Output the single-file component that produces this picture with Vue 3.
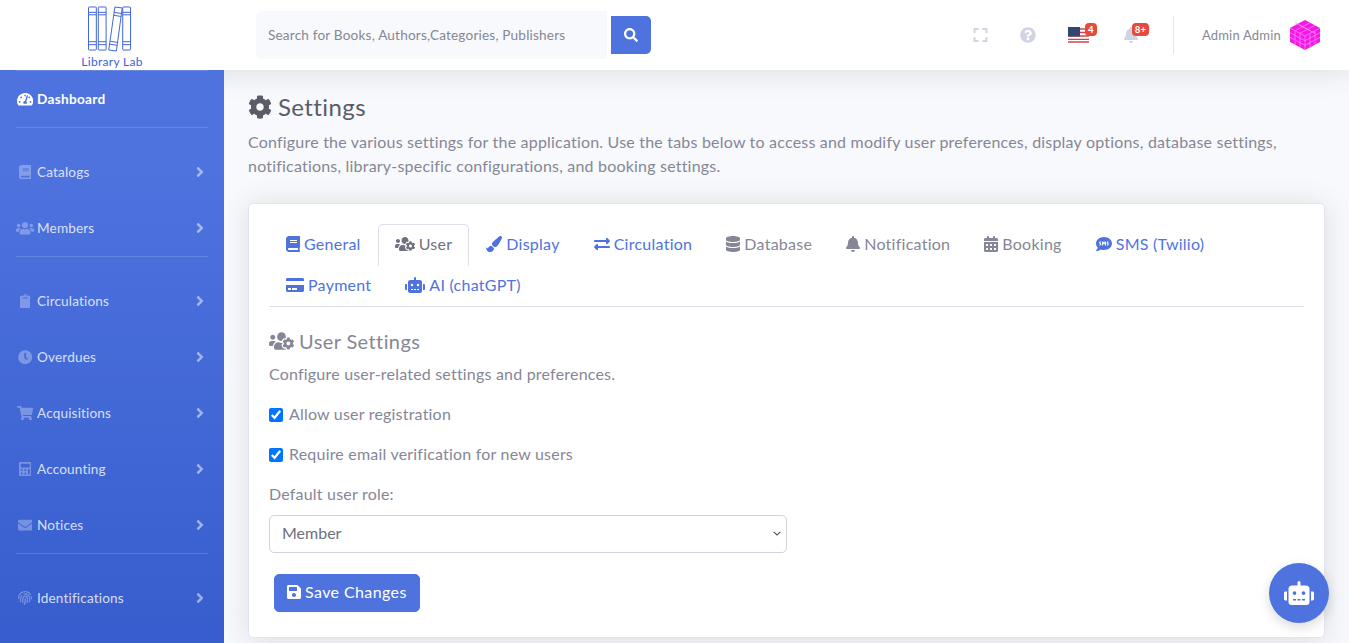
<script setup>
const icons = {
  dashboard: { vb: '0 0 576 512', d: 'M288 32C128.94 32 0 160.94 0 320c0 52.8 14.25 102.26 39.06 144.8 5.61 9.62 16.3 15.2 27.44 15.2h443c11.14 0 21.83-5.58 27.44-15.2C561.75 422.26 576 372.8 576 320c0-159.06-128.94-288-288-288zm0 64c14.71 0 26.58 10.13 30.32 23.65-1.11 2.26-2.64 4.23-3.45 6.67l-9.22 27.67c-5.13 3.49-10.97 6.01-17.64 6.01-17.67 0-32-14.33-32-32S270.33 96 288 96zM96 384c-17.67 0-32-14.33-32-32s14.33-32 32-32 32 14.33 32 32-14.33 32-32 32zm48-160c-17.67 0-32-14.33-32-32s14.33-32 32-32 32 14.33 32 32-14.33 32-32 32zm246.77-72.41l-61.33 184C343.13 347.33 352 364.54 352 384c0 11.72-3.38 22.55-8.88 32H232.88c-5.5-9.45-8.88-20.28-8.88-32 0-33.94 26.5-61.43 59.9-63.59l61.34-184.01c4.17-12.56 17.73-19.45 30.36-15.17 12.57 4.19 19.35 17.79 15.17 30.36zm14.66 57.2l15.52-46.55c3.47-1.29 7.13-2.23 11.05-2.23 17.67 0 32 14.33 32 32s-14.33 32-32 32c-11.38-.01-20.89-6.28-26.57-15.22zM480 384c-17.67 0-32-14.33-32-32s14.33-32 32-32 32 14.33 32 32-14.33 32-32 32z' },
  book: { vb: '0 0 448 512', d: 'M448 360V24c0-13.3-10.7-24-24-24H96C43 0 0 43 0 96v320c0 53 43 96 96 96h328c13.3 0 24-10.7 24-24v-16c0-7.5-3.5-14.3-8.9-18.7-4.2-15.4-4.2-59.3 0-74.7 5.4-4.3 8.9-11.1 8.9-18.6zM128 134c0-3.3 2.7-6 6-6h212c3.3 0 6 2.7 6 6v20c0 3.3-2.7 6-6 6H134c-3.3 0-6-2.7-6-6v-20zm0 64c0-3.3 2.7-6 6-6h212c3.3 0 6 2.7 6 6v20c0 3.3-2.7 6-6 6H134c-3.3 0-6-2.7-6-6v-20zm253.4 250H96c-17.7 0-32-14.3-32-32 0-17.6 14.4-32 32-32h285.4c-1.9 17.1-1.9 46.9 0 64z' },
  users: { vb: '0 0 640 512', d: 'M96 224c35.3 0 64-28.7 64-64s-28.7-64-64-64-64 28.7-64 64 28.7 64 64 64zm448 0c35.3 0 64-28.7 64-64s-28.7-64-64-64-64 28.7-64 64 28.7 64 64 64zm32 32h-64c-17.6 0-33.5 7.1-45.1 18.6 40.3 22.1 68.9 62 75.1 109.4h66c17.7 0 32-14.3 32-32v-32c0-35.3-28.7-64-64-64zm-256 0c61.9 0 112-50.1 112-112S381.9 32 320 32 208 82.1 208 144s50.1 112 112 112zm76.8 32h-8.3c-20.8 10-43.9 16-68.5 16s-47.6-6-68.5-16h-8.3C179.6 288 128 339.6 128 403.2V432c0 26.5 21.5 48 48 48h288c26.5 0 48-21.5 48-48v-28.8c0-63.6-51.6-115.2-115.2-115.2zm-223.7-13.4C161.5 263.1 145.6 256 128 256H64c-35.3 0-64 28.7-64 64v32c0 17.7 14.3 32 32 32h65.9c6.3-47.4 34.9-87.3 75.2-109.4z' },
  angle: { vb: '0 0 256 512', d: 'M224.3 273l-136 136c-9.4 9.4-24.6 9.4-33.9 0l-22.6-22.6c-9.4-9.4-9.4-24.6 0-33.9l96.4-96.4-96.4-96.4c-9.4-9.4-9.4-24.6 0-33.9L54.3 103c9.4-9.4 24.6-9.4 33.9 0l136 136c9.5 9.4 9.5 24.6.1 34z' },
  clipboard: { vb: '0 0 384 512', d: 'M384 112v352c0 26.51-21.49 48-48 48H48c-26.51 0-48-21.49-48-48V112c0-26.51 21.49-48 48-48h80c0-35.29 28.71-64 64-64s64 28.71 64 64h80c26.51 0 48 21.49 48 48zM192 40c-13.255 0-24 10.745-24 24s10.745 24 24 24 24-10.745 24-24-10.745-24-24-24m96 114v-20a6 6 0 0 0-6-6H102a6 6 0 0 0-6 6v20a6 6 0 0 0 6 6h180a6 6 0 0 0 6-6z' },
  clock: { vb: '0 0 512 512', d: 'M256,8C119,8,8,119,8,256S119,504,256,504,504,393,504,256,393,8,256,8Zm92.49,313h0l-20,25a16,16,0,0,1-22.49,2.5h0l-67-49.72a40,40,0,0,1-15-31.23V112a16,16,0,0,1,16-16h32a16,16,0,0,1,16,16V256l58,42.5A16,16,0,0,1,348.49,321Z' },
  cart: { vb: '0 0 576 512', d: 'M528.12 301.319l47.273-208C578.806 78.301 567.391 64 551.99 64H159.208l-9.166-44.81C147.758 8.021 137.93 0 126.529 0H24C10.745 0 0 10.745 0 24v16c0 13.255 10.745 24 24 24h69.883l70.248 343.435C147.325 417.1 136 435.222 136 456c0 30.928 25.072 56 56 56s56-25.072 56-56c0-15.674-6.447-29.835-16.824-40h209.647C430.447 426.165 424 440.326 424 456c0 30.928 25.072 56 56 56s56-25.072 56-56c0-22.172-12.888-41.332-31.579-50.405l5.517-24.276c3.413-15.018-8.002-29.319-23.403-29.319H218.117l-6.545-32h293.145c11.206 0 20.92-7.754 23.403-18.681z' },
  calculator: { vb: '0 0 448 512', d: 'M400 0H48C22.4 0 0 22.4 0 48v416c0 25.6 22.4 48 48 48h352c25.6 0 48-22.4 48-48V48c0-25.6-22.4-48-48-48zM128 435.2c0 6.4-6.4 12.8-12.8 12.8H76.8c-6.4 0-12.8-6.4-12.8-12.8v-38.4c0-6.4 6.4-12.8 12.8-12.8h38.4c6.4 0 12.8 6.4 12.8 12.8v38.4zm0-128c0 6.4-6.4 12.8-12.8 12.8H76.8c-6.4 0-12.8-6.4-12.8-12.8v-38.4c0-6.4 6.4-12.8 12.8-12.8h38.4c6.4 0 12.8 6.4 12.8 12.8v38.4zm128 128c0 6.4-6.4 12.8-12.8 12.8h-38.4c-6.4 0-12.8-6.4-12.8-12.8v-38.4c0-6.4 6.4-12.8 12.8-12.8h38.4c6.4 0 12.8 6.4 12.8 12.8v38.4zm0-128c0 6.4-6.4 12.8-12.8 12.8h-38.4c-6.4 0-12.8-6.4-12.8-12.8v-38.4c0-6.4 6.4-12.8 12.8-12.8h38.4c6.4 0 12.8 6.4 12.8 12.8v38.4zm128 128c0 6.4-6.4 12.8-12.8 12.8h-38.4c-6.4 0-12.8-6.4-12.8-12.8V268.8c0-6.4 6.4-12.8 12.8-12.8h38.4c6.4 0 12.8 6.4 12.8 12.8v166.4zm0-256c0 6.4-6.4 12.8-12.8 12.8H76.8c-6.4 0-12.8-6.4-12.8-12.8V76.8C64 70.4 70.4 64 76.8 64h294.4c6.4 0 12.8 6.4 12.8 12.8v102.4z' },
  envelope: { vb: '0 0 512 512', d: 'M502.3 190.8c3.9-3.1 9.7-.2 9.7 4.7V400c0 26.5-21.5 48-48 48H48c-26.5 0-48-21.5-48-48V195.6c0-5 5.7-7.8 9.7-4.7 22.4 17.4 52.1 39.5 154.1 113.6 21.1 15.4 56.7 47.8 92.2 47.6 35.7.3 72-32.8 92.3-47.6 102-74.1 131.6-96.3 154-113.7zM256 320c23.2.4 56.6-29.2 73.4-41.4 132.7-96.3 142.8-104.7 173.4-128.7 5.8-4.5 9.2-11.5 9.2-18.9v-19c0-26.5-21.5-48-48-48H48C21.5 64 0 85.5 0 112v19c0 7.4 3.4 14.3 9.2 18.9 30.6 23.9 40.7 32.4 173.4 128.7 16.8 12.2 50.2 41.8 73.4 41.4z' },
  fingerprint: { vb: '0 0 512 512', d: 'M256.12 245.96c-13.25 0-24 10.74-24 24 1.14 72.25-8.14 141.9-27.7 211.55-2.73 9.72 2.15 30.49 23.12 30.49 10.48 0 20.11-6.92 23.09-17.52 13.53-47.91 31.04-125.41 29.48-224.52.01-13.25-10.73-24-23.99-24zm-.86-81.73C194 164.16 151.25 211.3 152.1 265.32c.75 47.94-3.75 95.91-13.37 142.55-2.69 12.98 5.67 25.69 18.64 28.36 13.05 2.67 25.67-5.66 28.36-18.64 10.34-50.09 15.17-101.58 14.37-153.02-.41-25.95 19.92-52.49 54.45-52.34 31.31.47 57.15 25.34 57.62 55.47.77 48.05-2.81 96.33-10.61 143.55-2.17 13.06 6.69 25.42 19.76 27.58 19.97 3.33 26.81-15.1 27.58-19.77 8.28-50.03 12.06-101.21 11.27-152.11-.88-55.8-47.94-101.88-104.91-102.72zm-110.69-19.78c-10.3-8.34-25.37-6.8-33.76 3.48-25.62 31.5-39.39 71.28-38.75 112 .59 37.58-2.47 75.27-9.11 112.05-2.34 13.05 6.31 25.53 19.36 27.89 20.11 3.5 27.07-14.81 27.89-19.36 7.19-39.84 10.5-80.66 9.86-121.33-.47-29.88 9.2-57.88 28-80.97 8.35-10.28 6.79-25.39-3.49-33.76zm109.47-62.33c-15.41-.41-30.87 1.44-45.78 4.97-12.89 3.06-20.87 15.98-17.83 28.89 3.06 12.89 16 20.83 28.89 17.83 11.05-2.61 22.47-3.77 34-3.69 75.43 1.13 137.73 61.5 138.88 134.58.59 37.88-1.28 76.11-5.58 113.63-1.5 13.17 7.95 25.08 21.11 26.58 16.72 1.95 25.51-11.88 26.58-21.11a929.06 929.06 0 0 0 5.89-119.85c-1.56-98.75-85.07-180.33-186.16-181.83zm252.07 121.45c-2.86-12.92-15.51-21.2-28.61-18.27-12.94 2.86-21.12 15.66-18.26 28.61 4.71 21.41 4.91 37.41 4.7 61.6-.11 13.27 10.55 24.09 23.8 24.2h.2c13.17 0 23.89-10.61 24-23.8.18-22.18.4-44.11-5.83-72.34zm-40.12-90.72C417.29 43.46 337.6 1.29 252.81.02 183.02-.82 118.47 24.91 70.46 72.94 24.09 119.37-.9 181.04.14 246.65l-.12 21.47c-.39 13.25 10.03 24.31 23.28 24.69.23.02.48.02.72.02 12.92 0 23.59-10.3 23.97-23.3l.16-23.64c-.83-52.5 19.16-101.86 56.28-139 38.76-38.8 91.34-59.67 147.68-58.86 69.45 1.03 134.73 35.56 174.62 92.39 7.61 10.86 22.56 13.45 33.42 5.86 10.84-7.62 13.46-22.59 5.84-33.43z' },
  cog: { vb: '0 0 512 512', d: 'M487.4 315.7l-42.6-24.6c4.3-23.2 4.3-47 0-70.2l42.6-24.6c4.9-2.8 7.1-8.6 5.5-14-11.1-35.6-30-67.8-54.7-94.6-3.8-4.1-10-5.1-14.8-2.3L380.8 110c-17.9-15.4-38.5-27.3-60.8-35.1V25.8c0-5.6-3.9-10.5-9.4-11.7-36.7-8.2-74.3-7.8-109.2 0-5.5 1.2-9.4 6.1-9.4 11.7V75c-22.2 7.9-42.8 19.8-60.8 35.1L88.7 85.5c-4.9-2.8-11-1.9-14.8 2.3-24.7 26.7-43.6 58.9-54.7 94.6-1.7 5.4.6 11.2 5.5 14L67.3 221c-4.3 23.2-4.3 47 0 70.2l-42.6 24.6c-4.9 2.8-7.1 8.6-5.5 14 11.1 35.6 30 67.8 54.7 94.6 3.8 4.1 10 5.1 14.8 2.3l42.6-24.6c17.9 15.4 38.5 27.3 60.8 35.1v49.2c0 5.6 3.9 10.5 9.4 11.7 36.7 8.2 74.3 7.8 109.2 0 5.5-1.2 9.4-6.1 9.4-11.7v-49.2c22.2-7.9 42.8-19.8 60.8-35.1l42.6 24.6c4.9 2.8 11 1.9 14.8-2.3 24.7-26.7 43.6-58.9 54.7-94.6 1.5-5.5-.7-11.3-5.6-14.1zM256 336c-44.1 0-80-35.9-80-80s35.9-80 80-80 80 35.9 80 80-35.9 80-80 80z' },
  usersCog: { vb: '0 0 640 512', d: 'M610.5 341.3c2.6-14.1 2.6-28.5 0-42.6l25.8-14.9c3-1.7 4.3-5.2 3.3-8.5-6.7-21.6-18.2-41.2-33.2-57.4-2.3-2.5-6-3.1-9-1.4l-25.8 14.9c-10.9-9.3-23.4-16.5-36.9-21.3v-29.8c0-3.4-2.4-6.4-5.7-7.1-22.3-5-45-4.8-66.2 0-3.3.7-5.7 3.7-5.7 7.1v29.8c-13.5 4.8-26 12-36.9 21.3l-25.8-14.9c-2.9-1.7-6.7-1.1-9 1.4-15 16.2-26.5 35.8-33.2 57.4-1 3.3.4 6.8 3.3 8.5l25.8 14.9c-2.6 14.1-2.6 28.5 0 42.6l-25.8 14.9c-3 1.7-4.3 5.2-3.3 8.5 6.7 21.6 18.2 41.1 33.2 57.4 2.3 2.5 6 3.1 9 1.4l25.8-14.9c10.9 9.3 23.4 16.5 36.9 21.3v29.8c0 3.4 2.4 6.4 5.7 7.1 22.3 5 45 4.8 66.2 0 3.3-.7 5.7-3.7 5.7-7.1v-29.8c13.5-4.8 26-12 36.9-21.3l25.8 14.9c2.9 1.7 6.7 1.1 9-1.4 15-16.2 26.5-35.8 33.2-57.4 1-3.3-.4-6.8-3.3-8.5l-25.8-14.9zM496 368.5c-26.8 0-48.5-21.8-48.5-48.5s21.8-48.5 48.5-48.5 48.5 21.8 48.5 48.5-21.7 48.5-48.5 48.5zM96 224c35.3 0 64-28.7 64-64s-28.7-64-64-64-64 28.7-64 64 28.7 64 64 64zm224 32c1.9 0 3.7-.5 5.6-.6 8.3-21.7 20.5-42.1 36.3-59.2 7.4-8 17.9-12.6 28.9-12.6 6.9 0 13.7 1.8 19.6 5.3l7.9 4.6c.8-.5 1.6-.9 2.4-1.4 7-14.6 11.2-30.8 11.2-48 0-61.9-50.1-112-112-112S208 82.1 208 144c0 61.9 50.1 112 112 112zm105.2 194.5c-2.3-1.2-4.6-2.6-6.8-3.9-8.2 4.8-15.3 9.8-27.5 9.8-10.9 0-21.4-4.6-28.9-12.6-18.3-19.8-32.3-43.9-40.2-69.6-10.7-34.5 24.9-49.7 25.8-50.3-.1-2.6-.1-5.2 0-7.8l-7.9-4.6c-3.8-2.2-7-5-9.8-8.1-3.3.2-6.5.6-9.8.6-24.6 0-47.6-6-68.5-16h-8.3C179.6 288 128 339.6 128 403.2V432c0 26.5 21.5 48 48 48h255.4c-3.7-6-6.2-12.8-6.2-20.3v-9.2zM173.1 274.6C161.5 263.1 145.6 256 128 256H64c-35.3 0-64 28.7-64 64v32c0 17.7 14.3 32 32 32h65.9c6.3-47.4 34.9-87.3 75.2-109.4z' },
  brush: { vb: '0 0 512 512', d: 'M167.02 309.34c-40.12 2.58-76.53 17.86-97.19 72.3-2.35 6.21-8 9.98-14.59 9.98-11.11 0-45.46-27.67-55.25-34.35C0 439.62 37.93 512 128 512c75.86 0 128-43.77 128-120.19 0-3.11-.65-6.08-.97-9.13l-88.01-73.34zM457.89 0c-15.16 0-29.37 6.71-40.21 16.45C213.27 199.05 192 203.34 192 257.09c0 13.7 3.25 26.76 8.73 38.7l63.82 53.18c7.21 1.8 14.64 3.03 22.39 3.03 62.11 0 98.11-45.47 211.16-256.46 7.38-14.35 13.9-29.85 13.9-45.99C512 20.64 486 0 457.89 0z' },
  exchange: { vb: '0 0 512 512', d: 'M0 168v-16c0-13.255 10.745-24 24-24h360V80c0-21.367 25.899-32.042 40.971-16.971l80 80c9.372 9.373 9.372 24.569 0 33.941l-80 80C409.956 271.982 384 261.456 384 240v-48H24c-13.255 0-24-10.745-24-24zm488 152H128v-48c0-21.314-25.862-32.08-40.971-16.971l-80 80c-9.372 9.373-9.372 24.569 0 33.941l80 80C102.057 463.997 128 453.437 128 432v-48h360c13.255 0 24-10.745 24-24v-16c0-13.255-10.745-24-24-24z' },
  database: { vb: '0 0 448 512', d: 'M448 73.143v45.714C448 159.143 347.667 192 224 192S0 159.143 0 118.857V73.143C0 32.857 100.333 0 224 0s224 32.857 224 73.143zM448 176v102.857C448 319.143 347.667 352 224 352S0 319.143 0 278.857V176c48.125 33.143 136.208 48.572 224 48.572S399.874 209.143 448 176zm0 160v102.857C448 479.143 347.667 512 224 512S0 479.143 0 438.857V336c48.125 33.143 136.208 48.572 224 48.572S399.874 369.143 448 336z' },
  bell: { vb: '0 0 448 512', d: 'M224 512c35.32 0 63.97-28.65 63.97-64H160.03c0 35.35 28.65 64 63.97 64zm215.39-149.71c-19.32-20.76-55.47-51.99-55.47-154.29 0-77.7-54.48-139.9-127.94-155.16V32c0-17.67-14.32-32-31.98-32s-31.98 14.33-31.98 32v20.84C118.56 68.1 64.08 130.3 64.08 208c0 102.3-36.15 133.53-55.47 154.29-6 6.45-8.66 14.16-8.61 21.71.11 16.4 12.98 32 32.1 32h383.8c19.12 0 32-15.6 32.1-32 .05-7.55-2.61-15.27-8.61-21.71z' },
  calendar: { vb: '0 0 448 512', d: 'M0 464c0 26.5 21.5 48 48 48h352c26.5 0 48-21.5 48-48V192H0v272zm320-196c0-6.6 5.4-12 12-12h40c6.6 0 12 5.4 12 12v40c0 6.6-5.4 12-12 12h-40c-6.6 0-12-5.4-12-12v-40zm0 128c0-6.6 5.4-12 12-12h40c6.6 0 12 5.4 12 12v40c0 6.6-5.4 12-12 12h-40c-6.6 0-12-5.4-12-12v-40zM192 268c0-6.6 5.4-12 12-12h40c6.6 0 12 5.4 12 12v40c0 6.6-5.4 12-12 12h-40c-6.6 0-12-5.4-12-12v-40zm0 128c0-6.6 5.4-12 12-12h40c6.6 0 12 5.4 12 12v40c0 6.6-5.4 12-12 12h-40c-6.6 0-12-5.4-12-12v-40zM64 268c0-6.6 5.4-12 12-12h40c6.6 0 12 5.4 12 12v40c0 6.6-5.4 12-12 12H76c-6.6 0-12-5.4-12-12v-40zm0 128c0-6.6 5.4-12 12-12h40c6.6 0 12 5.4 12 12v40c0 6.6-5.4 12-12 12H76c-6.6 0-12-5.4-12-12v-40zM400 64h-48V16c0-8.8-7.2-16-16-16h-32c-8.8 0-16 7.2-16 16v48H160V16c0-8.8-7.2-16-16-16h-32c-8.8 0-16 7.2-16 16v48H48C21.5 64 0 85.5 0 112v48h448v-48c0-26.5-21.5-48-48-48z' },
  sms: { vb: '0 0 512 512', d: 'M256 32C114.6 32 0 125.1 0 240c0 49.6 21.4 95 57 130.7C44.5 421.1 2.7 466 2.2 466.5c-2.2 2.3-2.8 5.7-1.5 8.7 1.3 3 4.1 4.8 7.3 4.8 66.3 0 116-31.8 140.6-51.4 32.7 12.3 69 19.4 107.4 19.4 141.4 0 256-93.1 256-208S397.4 32 256 32zM128.2 304H116c-4.4 0-8-3.6-8-8v-16c0-4.4 3.6-8 8-8h12.3c6 0 10.4-3.5 10.4-6.6 0-1.3-.8-2.7-2.1-3.8l-21.9-18.8c-8.5-7.2-13.3-17.5-13.3-28.1 0-21.3 19-38.6 42.4-38.6H156c4.4 0 8 3.6 8 8v16c0 4.4-3.6 8-8 8h-12.3c-6 0-10.4 3.5-10.4 6.6 0 1.3.8 2.7 2.1 3.8l21.9 18.8c8.5 7.2 13.3 17.5 13.3 28.1.1 21.3-19 38.6-42.4 38.6zm191.8-8c0 4.4-3.6 8-8 8h-16c-4.4 0-8-3.6-8-8v-68.2l-24.8 55.8c-2.9 5.9-11.4 5.9-14.3 0L224 227.8V296c0 4.4-3.6 8-8 8h-16c-4.4 0-8-3.6-8-8V192c0-8.8 7.2-16 16-16h16c6.1 0 11.6 3.4 14.3 8.8l17.7 35.4 17.7-35.4c2.7-5.4 8.3-8.8 14.3-8.8h16c8.8 0 16 7.2 16 16v104zm48.3 8H356c-4.4 0-8-3.6-8-8v-16c0-4.4 3.6-8 8-8h12.3c6 0 10.4-3.5 10.4-6.6 0-1.3-.8-2.7-2.1-3.8l-21.9-18.8c-8.5-7.2-13.3-17.5-13.3-28.1 0-21.3 19-38.6 42.4-38.6H396c4.4 0 8 3.6 8 8v16c0 4.4-3.6 8-8 8h-12.3c-6 0-10.4 3.5-10.4 6.6 0 1.3.8 2.7 2.1 3.8l21.9 18.8c8.5 7.2 13.3 17.5 13.3 28.1.1 21.3-18.9 38.6-42.3 38.6z' },
  card: { vb: '0 0 576 512', d: 'M0 432c0 26.5 21.5 48 48 48h480c26.5 0 48-21.5 48-48V256H0v176zm192-68c0-6.6 5.4-12 12-12h136c6.6 0 12 5.4 12 12v40c0 6.6-5.4 12-12 12H204c-6.6 0-12-5.4-12-12v-40zm-128 0c0-6.6 5.4-12 12-12h72c6.6 0 12 5.4 12 12v40c0 6.6-5.4 12-12 12H76c-6.6 0-12-5.4-12-12v-40zM576 80v48H0V80c0-26.5 21.5-48 48-48h480c26.5 0 48 21.5 48 48z' },
  robot: { vb: '0 0 640 512', d: 'M32,224H64V416H32A31.96166,31.96166,0,0,1,0,384V256A31.96166,31.96166,0,0,1,32,224Zm512-48V448a64.06328,64.06328,0,0,1-64,64H160a64.06328,64.06328,0,0,1-64-64V176a79.974,79.974,0,0,1,80-80H288V32a32,32,0,0,1,64,0V96H464A79.974,79.974,0,0,1,544,176ZM264,256a40,40,0,1,0-40,40A39.997,39.997,0,0,0,264,256Zm-8,128H192v32h64Zm96,0H288v32h64ZM456,256a40,40,0,1,0-40,40A39.997,39.997,0,0,0,456,256Zm-8,128H384v32h64ZM640,256V384a31.96166,31.96166,0,0,1-32,32H576V224h32A31.96166,31.96166,0,0,1,640,256Z' },
  save: { vb: '0 0 448 512', d: 'M433.941 129.941l-83.882-83.882A48 48 0 0 0 316.118 32H48C21.49 32 0 53.49 0 80v352c0 26.51 21.49 48 48 48h352c26.51 0 48-21.49 48-48V163.882a48 48 0 0 0-14.059-33.941zM224 416c-35.346 0-64-28.654-64-64 0-35.346 28.654-64 64-64s64 28.654 64 64c0 35.346-28.654 64-64 64zm96-304.52V212c0 6.627-5.373 12-12 12H76c-6.627 0-12-5.373-12-12V108c0-6.627 5.373-12 12-12h228.52c3.183 0 6.235 1.264 8.485 3.515l3.48 3.48A11.996 11.996 0 0 1 320 111.48z' },
  search: { vb: '0 0 512 512', d: 'M505 442.7L405.3 343c-4.5-4.5-10.6-7-17-7H372c27.6-35.3 44-79.7 44-128C416 93.1 322.9 0 208 0S0 93.1 0 208s93.1 208 208 208c48.3 0 92.7-16.4 128-44v16.3c0 6.4 2.5 12.5 7 17l99.7 99.7c9.4 9.4 24.6 9.4 33.9 0l28.3-28.3c9.4-9.4 9.4-24.6.1-34zM208 336c-70.7 0-128-57.2-128-128 0-70.7 57.2-128 128-128 70.7 0 128 57.2 128 128 0 70.7-57.2 128-128 128z' },
  question: { vb: '0 0 512 512', d: 'M504 256c0 136.997-111.043 248-248 248S8 392.997 8 256C8 119.083 119.043 8 256 8s248 111.083 248 248zM262.655 90c-54.497 0-89.255 22.957-116.549 63.758-3.536 5.286-2.353 12.415 2.715 16.258l34.699 26.31c5.205 3.947 12.621 3.008 16.665-2.122 17.864-22.658 30.113-35.797 57.303-35.797 20.429 0 45.698 13.148 45.698 32.958 0 14.976-12.363 22.667-32.534 33.976C247.128 238.528 216 254.941 216 296v4c0 6.627 5.373 12 12 12h56c6.627 0 12-5.373 12-12v-1.333c0-28.462 83.186-29.647 83.186-106.667 0-58.002-60.165-102-116.531-102zM256 338c-25.365 0-46 20.635-46 46 0 25.364 20.635 46 46 46s46-20.636 46-46c0-25.365-20.635-46-46-46z' },
  expand: { vb: '0 0 448 512', d: 'M0 180V56c0-13.3 10.7-24 24-24h124c6.6 0 12 5.4 12 12v40c0 6.6-5.4 12-12 12H64v84c0 6.6-5.4 12-12 12H12c-6.6 0-12-5.4-12-12zM288 44v40c0 6.6 5.4 12 12 12h84v84c0 6.6 5.4 12 12 12h40c6.6 0 12-5.4 12-12V56c0-13.3-10.7-24-24-24H300c-6.6 0-12 5.4-12 12zm148 276h-40c-6.6 0-12 5.4-12 12v84h-84c-6.6 0-12 5.4-12 12v40c0 6.6 5.4 12 12 12h124c13.3 0 24-10.7 24-24V332c0-6.6-5.4-12-12-12zM160 468v-40c0-6.6-5.4-12-12-12H64v-84c0-6.6-5.4-12-12-12H12c-6.6 0-12 5.4-12 12v124c0 13.3 10.7 24 24 24h124c6.6 0 12-5.4 12-12z' }
}

const menuGroups = [
  [{ label: 'Catalogs', icon: 'book' }, { label: 'Members', icon: 'users' }],
  [
    { label: 'Circulations', icon: 'clipboard' },
    { label: 'Overdues', icon: 'clock' },
    { label: 'Acquisitions', icon: 'cart' },
    { label: 'Accounting', icon: 'calculator' },
    { label: 'Notices', icon: 'envelope' }
  ],
  [{ label: 'Identifications', icon: 'fingerprint' }]
]

const tabs = [
  { label: 'General', icon: 'book' },
  { label: 'User', icon: 'usersCog', active: true },
  { label: 'Display', icon: 'brush' },
  { label: 'Circulation', icon: 'exchange' },
  { label: 'Database', icon: 'database', muted: true },
  { label: 'Notification', icon: 'bell', muted: true },
  { label: 'Booking', icon: 'calendar', muted: true },
  { label: 'SMS (Twilio)', icon: 'sms' },
  { label: 'Payment', icon: 'card' },
  { label: 'AI (chatGPT)', icon: 'robot' }
]
</script>

<template>
  <div class="page">
    <header class="topbar">
      <div class="brand">
        <svg class="logo" viewBox="0 0 46 46" fill="none" stroke="#3d63d9" stroke-width="1">
          <rect x="0.5" y="0.5" width="8" height="44" rx="0.8" />
          <path d="M.5 6h8M.5 8.5h8M.5 36h8M.5 39h8" />
          <rect x="10.5" y="0.5" width="8" height="44" rx="0.8" />
          <path d="M10.5 6h8M10.5 8.5h8M10.5 36h8M10.5 39h8" />
          <path d="M27.5.5l7.5 1-6 44-7.8-1z" />
          <path d="M26.7 6l7.6 1.2M26.3 9l7.6 1.2M22.6 35.5l7.6 1.2M22.2 38.5l7.6 1.2" />
          <rect x="35.5" y="0.5" width="8" height="44" rx="0.8" />
          <path d="M35.5 6h8M35.5 8.5h8M35.5 36h8M35.5 39h8" />
        </svg>
        <span class="brand-name">Library Lab</span>
      </div>

      <form class="search" @submit.prevent>
        <input type="text" placeholder="Search for Books, Authors,Categories, Publishers" />
        <button type="submit">
          <svg :viewBox="icons.search.vb"><path :d="icons.search.d" /></svg>
        </button>
      </form>

      <div class="top-actions">
        <svg class="top-icon expand" :viewBox="icons.expand.vb"><path :d="icons.expand.d" /></svg>
        <svg class="top-icon question" :viewBox="icons.question.vb"><path :d="icons.question.d" /></svg>
        <div class="flag-wrap">
          <svg class="flag" viewBox="0 0 21 16">
            <rect width="21" height="16" fill="#fff" />
            <path d="M0 2h21M0 5.500h21M0 9h21M0 12.300h21M0 15h21" stroke="#d0454c" stroke-width="1.300" />
            <rect width="12" height="9.500" fill="#33466f" />
          </svg>
          <span class="badge count">4</span>
        </div>
        <div class="bell-wrap">
          <svg class="top-icon" :viewBox="icons.bell.vb"><path :d="icons.bell.d" /></svg>
          <span class="badge more">8+</span>
        </div>
        <div class="top-divider"></div>
        <span class="user-name">Admin Admin</span>
        <svg class="avatar" viewBox="0 0 30 30">
          <path d="M15 0l15 8v14l-15 8-15-8V8z" fill="#f318e6" />
          <path d="M5 2.700l15 8M10 5.300l15 8M0 8l15 8 15-8M15 16v14M5 10.700V24.700M10 13.300V27.300M20 13.300V27.300M25 10.700V24.700M0 12.700l15 8 15-8M0 17.300l15 8 15-8M20 2.700l-15 8M25 5.300l-15 8" stroke="#ff8cf7" stroke-width="0.700" fill="none" />
        </svg>
      </div>
    </header>

    <div class="body-row">
      <aside class="sidebar">
        <div class="side-divider first"></div>
        <a class="side-item active">
          <span class="side-icon"><svg :viewBox="icons.dashboard.vb"><path :d="icons.dashboard.d" /></svg></span>
          <span>Dashboard</span>
        </a>
        <template v-for="(group, i) in menuGroups" :key="i">
          <div class="side-divider"></div>
          <a v-for="item in group" :key="item.label" class="side-item">
            <span class="side-icon"><svg :viewBox="icons[item.icon].vb"><path :d="icons[item.icon].d" /></svg></span>
            <span>{{ item.label }}</span>
            <svg class="side-arrow" :viewBox="icons.angle.vb"><path :d="icons.angle.d" /></svg>
          </a>
        </template>
      </aside>

      <main class="main">
        <h1 class="page-title">
          <svg :viewBox="icons.cog.vb"><path :d="icons.cog.d" /></svg>
          Settings
        </h1>
        <p class="page-desc">Configure the various settings for the application. Use the tabs below to access and modify user preferences, display options, database settings, notifications, library-specific configurations, and booking settings.</p>

        <section class="card">
          <ul class="tabs">
            <li v-for="tab in tabs" :key="tab.label" class="tab" :class="{ active: tab.active, muted: tab.muted }">
              <svg :viewBox="icons[tab.icon].vb"><path :d="icons[tab.icon].d" /></svg>
              <span>{{ tab.label }}</span>
            </li>
          </ul>

          <div class="pane">
            <h2 class="pane-title">
              <svg :viewBox="icons.usersCog.vb"><path :d="icons.usersCog.d" /></svg>
              User Settings
            </h2>
            <p class="pane-desc">Configure user-related settings and preferences.</p>
            <label class="check"><input type="checkbox" checked /> Allow user registration</label>
            <label class="check"><input type="checkbox" checked /> Require email verification for new users</label>
            <label class="field-label" for="role">Default user role:</label>
            <select id="role" class="select">
              <option>Member</option>
            </select>
            <button class="save-btn" type="button">
              <svg :viewBox="icons.save.vb"><path :d="icons.save.d" /></svg>
              Save Changes
            </button>
          </div>
        </section>
      </main>
    </div>

    <button class="chat-btn" type="button">
      <svg :viewBox="icons.robot.vb"><path :d="icons.robot.d" /></svg>
    </button>
  </div>
</template>

<style>
html, body {
  margin: 0;
  height: 100%;
  overflow: hidden;
}
</style>

<style scoped>
* {
  box-sizing: border-box;
}

svg {
  display: block;
  fill: currentColor;
  flex-shrink: 0;
}

.page {
  height: 100vh;
  display: flex;
  flex-direction: column;
  overflow: hidden;
  font-family: Lato, "Liberation Sans", sans-serif;
  font-size: 16px;
  line-height: 24px;
  letter-spacing: 0.2px;
  color: #858796;
  background: #f8f9fc;
}

/* top bar */
.topbar {
  height: 70px;
  flex-shrink: 0;
  display: flex;
  align-items: center;
  background: #fff;
  box-shadow: 0 2.4px 28px rgba(58, 59, 69, 0.15);
  position: relative;
  z-index: 2;
}

.brand {
  width: 224px;
  height: 70px;
  flex-shrink: 0;
  display: flex;
  flex-direction: column;
  align-items: center;
  padding-top: 6px;
}

.logo {
  width: 45px;
  height: 46px;
  margin-right: 4px;
  fill: none;
}

.brand-name {
  font-size: 12px;
  line-height: 14px;
  margin-top: 3px;
  color: #3d63d9;
  letter-spacing: 0.3px;
}

.search {
  margin-left: 32px;
  display: flex;
  align-items: center;
}

.search input {
  width: 351px;
  height: 48px;
  border: 0;
  outline: 0;
  padding: 0 12px;
  background: #f8f9fc;
  border-radius: 5px 0 0 5px;
  font: inherit;
  font-size: 13.6px;
  letter-spacing: 0.18px;
  color: #6e707e;
}

.search input::placeholder {
  color: #858796;
  opacity: 1;
}

.search button {
  width: 40px;
  height: 38px;
  margin-left: 4px;
  border: 0;
  background: #4e73df;
  color: #fff;
  border-radius: 0 5px 5px 0;
  display: flex;
  align-items: center;
  justify-content: center;
  padding: 0;
}

.search button svg {
  width: 14px;
  height: 14px;
}

.top-actions {
  margin-left: auto;
  height: 100%;
  display: flex;
  align-items: center;
  padding-right: 29px;
}

.top-icon {
  width: 16px;
  height: 16px;
  color: #d1d3e2;
}

.top-icon.expand {
  width: 15px;
}

.top-icon.question {
  margin-left: 32px;
}

.flag-wrap,
.bell-wrap {
  position: relative;
}

.flag-wrap {
  margin-left: 32px;
}

.bell-wrap {
  margin-left: 34px;
}

.flag {
  width: 21px;
  height: 16px;
}

.badge {
  position: absolute;
  top: -4px;
  height: 13px;
  border-radius: 4px;
  background: #e74a3b;
  color: #fff;
  font-size: 9.6px;
  font-weight: 700;
  line-height: 13px;
  letter-spacing: 0;
  text-align: center;
}

.badge.count {
  left: 17px;
  width: 12px;
}

.badge.more {
  left: 9px;
  width: 17px;
}

.top-divider {
  width: 1px;
  height: 38px;
  margin: 0 28px 0 34px;
  background: #e3e6f0;
}

.user-name {
  font-size: 13px;
  color: #858796;
  margin-right: 9px;
}

.avatar {
  width: 30px;
  height: 30px;
}

.body-row {
  flex: 1;
  min-height: 0;
  display: flex;
}

/* sidebar */
.sidebar {
  width: 224px;
  flex-shrink: 0;
  position: relative;
  z-index: 3;
  background: linear-gradient(180deg, #4e73df 100px, #224abe 1000px);
  font-size: 13.6px;
  letter-spacing: 0.15px;
  color: rgba(255, 255, 255, 0.8);
}

.side-divider {
  height: 1px;
  margin: 0 16px 16px;
  background: rgba(255, 255, 255, 0.15);
}

.side-divider.first {
  margin-bottom: 0;
}

.side-item {
  height: 56px;
  display: flex;
  align-items: center;
  padding: 0 20px 0 16px;
}

.side-item.active {
  color: #fff;
  font-weight: 700;
  letter-spacing: 0.3px;
}

.side-icon {
  width: 18px;
  margin-right: 3px;
  display: flex;
  justify-content: center;
  color: rgba(255, 255, 255, 0.3);
}

.side-item.active .side-icon {
  color: #fff;
}

.side-icon svg {
  height: 14.400px;
}

.side-arrow {
  margin-left: auto;
  width: 8px;
  height: 16px;
  color: rgba(255, 255, 255, 0.5);
}

/* main */
.main {
  flex: 1;
  min-width: 0;
  padding: 23px 24px 0;
}

.page-title {
  margin: 0 0 8px;
  display: flex;
  align-items: center;
  gap: 6px;
  font-size: 24px;
  line-height: 28.800px;
  font-weight: 400;
  letter-spacing: 0.4px;
  color: #5a5c69;
}

.page-title svg {
  width: 24px;
  height: 24px;
}

.page-desc {
  margin: 0 0 25px;
}

.card {
  background: #fff;
  border: 1px solid #e3e6f0;
  border-radius: 5px;
  padding: 20px 20px 25px;
  box-shadow: 0 2.4px 28px rgba(58, 59, 69, 0.15);
}

.tabs {
  list-style: none;
  margin: 0;
  padding: 0;
  display: flex;
  flex-wrap: wrap;
  border-bottom: 1px solid #dddfeb;
}

.tab {
  display: flex;
  align-items: center;
  gap: 4px;
  height: 42px;
  margin-bottom: -1px;
  padding: 0 16px 2px;
  border: 1px solid transparent;
  border-radius: 5px 5px 0 0;
  letter-spacing: 0.26px;
  color: #4e73df;
}

.tab svg {
  height: 16px;
}

.tab.muted {
  color: #858796;
}

.tab.active {
  color: #6e707e;
  background: #fff;
  border-color: #dddfeb #dddfeb #fff;
}

.pane {
  padding-top: 22px;
  display: flex;
  flex-direction: column;
  align-items: flex-start;
}

.pane-title {
  margin: 0 0 9px;
  display: flex;
  align-items: center;
  gap: 5px;
  font-size: 20px;
  line-height: 24px;
  font-weight: 400;
  letter-spacing: 0.4px;
}

.pane-title svg {
  width: 25px;
  height: 20px;
}

.pane-desc {
  margin: 0 0 16px;
}

.check {
  display: flex;
  align-items: center;
  gap: 6px;
  margin-bottom: 16px;
}

.check input {
  width: 14px;
  height: 14px;
  margin: 2px 0 0;
}

.field-label {
  margin-bottom: 9px;
}

.select {
  width: 518px;
  height: 38px;
  padding: 0 8px 2px 12px;
  border: 1px solid #d1d3e2;
  border-radius: 5px;
  appearance: none;
  background: #fff url("data:image/svg+xml,%3Csvg xmlns='http://www.w3.org/2000/svg' viewBox='0 0 8 5'%3E%3Cpath d='M.7.8L4 4l3.300-3.200' fill='none' stroke='%23555' stroke-width='1.100'/%3E%3C/svg%3E") no-repeat right 5px center / 8px 5px;
  font: inherit;
  letter-spacing: 0;
  color: #6e707e;
}

.save-btn {
  margin: 21px 0 0 5px;
  height: 38px;
  padding: 0 12px 2px;
  display: flex;
  align-items: center;
  gap: 4px;
  border: 1px solid #4e73df;
  border-radius: 5px;
  background: #4e73df;
  color: #fff;
  font: inherit;
  letter-spacing: 0.4px;
}

.save-btn svg {
  width: 14px;
  height: 16px;
}

.chat-btn {
  position: fixed;
  right: 20px;
  bottom: 20px;
  width: 60px;
  height: 60px;
  padding: 0;
  border: 0;
  border-radius: 50%;
  background: #4e73df;
  color: #fff;
  display: flex;
  align-items: center;
  justify-content: center;
  box-shadow: 0 4px 12px rgba(0, 0, 0, 0.15);
  z-index: 5;
}

.chat-btn svg {
  width: 30px;
  height: 24px;
}
</style>
